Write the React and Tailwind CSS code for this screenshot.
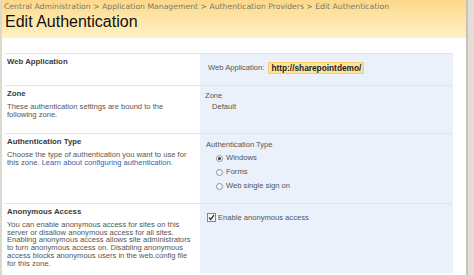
import React from 'react';

const Radio = ({ checked, label }) => (
  <div className="flex items-center h-[14px]">
    <span className="w-[7px] h-[7px] rounded-full border border-[#8f959c] bg-[#f4f6f8] flex items-center justify-center mr-[3px]">
      {checked && <span className="w-[3px] h-[3px] rounded-full bg-[#2f3d55]" />}
    </span>
    <span>{label}</span>
  </div>
);

const Section = ({ title, lines, right, className }) => (
  <div className={`flex shrink-0 border-t border-[#e0e3e7] ${className}`}>
    <div className="w-[195px] pl-[2px] pt-[4px]">
      <p className="text-[7.8px] leading-[8px] font-bold text-[#3a3a3a]">{title}</p>
      {lines && (
        <div className="mt-[5px] text-[7.6px] leading-[7.7px] text-[#555] whitespace-nowrap">
          {lines.map((line, i) => (
            <p key={i}>{line}</p>
          ))}
        </div>
      )}
    </div>
    <div className="flex-1 bg-[#eaf1fb] text-[7.6px] text-[#555]">{right}</div>
  </div>
);

export default function App() {
  return (
    <div className="w-[474px] h-[275px] overflow-hidden flex bg-white font-['Liberation_Sans',Arial,sans-serif]">
      <div className="w-[2px] shrink-0 bg-[#dcd9cf]" />
      <div className="flex-1 flex flex-col">
        <div className="h-[38px] shrink-0 bg-gradient-to-b from-[#fcd98a] to-[#fff1c5] pl-[2px] pt-[3px]">
          <p className="font-['DejaVu_Sans',sans-serif] text-[7.7px] leading-[8px] text-[#7b7868] whitespace-nowrap">
            Central Administration &gt; Application Management &gt; Authentication Providers &gt; Edit Authentication
          </p>
          <h1 className="text-[16px] leading-[20px] mt-[1px] ml-[1px] text-[#111]">Edit Authentication</h1>
        </div>
        <div className="mt-[15px] ml-[3px] mr-[13px] flex flex-col shrink-0">
          <Section
            title="Web Application"
            className="h-[32px]"
            right={
              <div className="flex items-center pl-[8px] pt-[8px]">
                <span>Web Application:</span>
                <span className="ml-[4px] px-[2px] h-[12px] flex items-center bg-[#fde39a] border border-[#f0cf70] font-bold text-[8.3px] text-[#222]">
                  http://sharepointdemo/
                </span>
              </div>
            }
          />
          <Section
            title="Zone"
            className="h-[48px]"
            lines={['These authentication settings are bound to the', 'following zone.']}
            right={
              <div className="pl-[5px] pt-[5px] leading-[10px]">
                <p>Zone</p>
                <p className="pl-[7px] mt-[1px]">Default</p>
              </div>
            }
          />
          <Section
            title="Authentication Type"
            className="h-[70px]"
            lines={[
              'Choose the type of authentication you want to use for',
              <>
                this zone. <span className="text-[#3560b5]">Learn about configuring authentication.</span>
              </>,
            ]}
            right={
              <div className="pl-[6px] pt-[6px] leading-[10px]">
                <p>Authentication Type</p>
                <div className="pl-[10px] mt-[1px]">
                  <Radio checked label="Windows" />
                  <Radio label="Forms" />
                  <Radio label="Web single sign on" />
                </div>
              </div>
            }
          />
          <Section
            title="Anonymous Access"
            className="h-[70px]"
            lines={[
              'You can enable anonymous access for sites on this',
              'server or disallow anonymous access for all sites.',
              'Enabling anonymous access allows site administrators',
              'to turn anonymous access on. Disabling anonymous',
              'access blocks anonymous users in the web.config file',
              'for this zone.',
            ]}
            right={
              <div className="pl-[7px] pt-[8px] flex items-center">
                <span className="w-[9px] h-[9px] border border-[#7f8790] bg-[#f7f8fa] flex items-center justify-center mr-[2px]">
                  <svg width="7" height="7" viewBox="0 0 7 7">
                    <path d="M1 3.5 L2.8 5.5 L6 1" stroke="#2b3548" strokeWidth="1.3" fill="none" />
                  </svg>
                </span>
                <span>Enable anonymous access</span>
              </div>
            }
          />
        </div>
      </div>
      <div className="w-[8px] shrink-0 bg-[#e2ded6] border-l-2 border-[#c9c4ba]" />
    </div>
  );
}
